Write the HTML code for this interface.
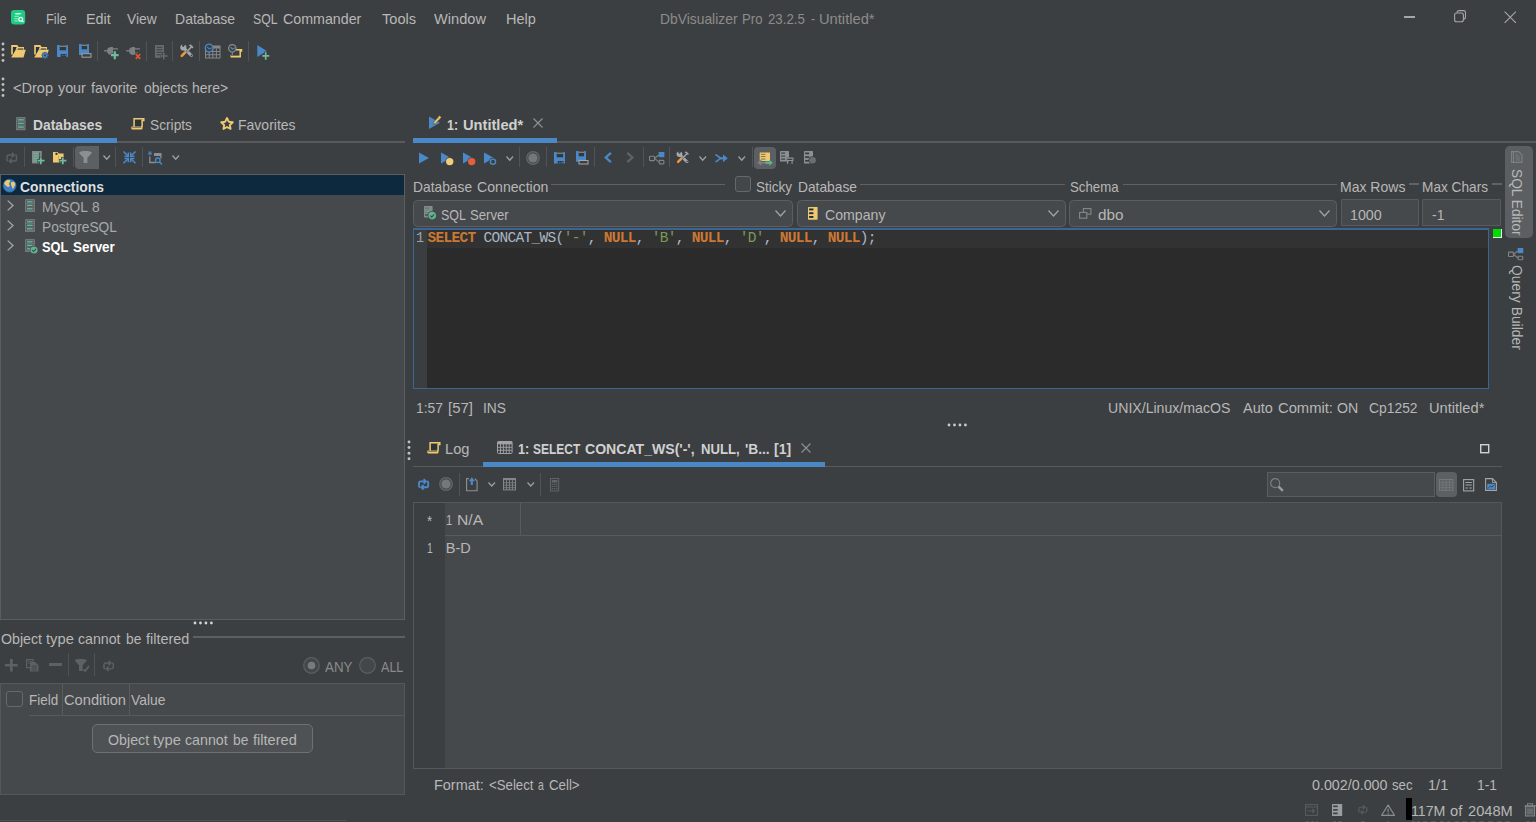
<!DOCTYPE html>
<html lang="en"><head><meta charset="utf-8"><title>DbVisualizer Pro 23.2.5 - Untitled*</title>
<style>
html,body{margin:0;padding:0}
body{width:1536px;height:822px;overflow:hidden;background:#3c3f41;position:relative;font-family:"Liberation Sans", sans-serif;}
.r{position:absolute;box-sizing:border-box}
.i{position:absolute;overflow:visible}
.t{position:absolute;white-space:pre;line-height:1;transform-origin:0 0;}
.s{font-family:"Liberation Sans", sans-serif}
.m{font-family:"Liberation Mono", monospace}
</style></head>
<body>
<svg class="i" style="left:10.9px;top:9.8px" width="14.2" height="14.5" viewBox="0 0 14.200 14.500"><rect x="0" y="0" width="14.2" height="14.5" fill="#1fcb83" rx="3.2"/><ellipse cx="7" cy="3.700" rx="3.600" ry="0.700" fill="#e9fff5" opacity="0.9"/><path d="M3.300 6.400h4.500M3.300 8.600h3.300M3.300 10.800h4" fill="none" stroke="#e9fff5" stroke-width="1.3" opacity="0.5"/><circle cx="9.7" cy="9.2" r="1.9" fill="none" stroke="#e9fff5" stroke-width="1.3"/><path d="M11 10.600l1.500 1.500" fill="none" stroke="#e9fff5" stroke-width="1.4"/><circle cx="9.7" cy="9.2" r="1.9" fill="none" stroke="#1fcb83" stroke-width="0"/></svg>
<span class="t s" style="font-size:14.5px;color:#b7b7b7;left:45.61px;top:11.73px;transform:scaleX(0.8879);">File</span>
<span class="t s" style="font-size:14.5px;color:#b7b7b7;left:85.61px;top:11.73px;transform:scaleX(0.9893);">Edit</span>
<span class="t s" style="font-size:14.5px;color:#b7b7b7;left:127.30px;top:11.73px;transform:scaleX(0.9528);">View</span>
<span class="t s" style="font-size:14.5px;color:#b7b7b7;left:174.83px;top:11.73px;transform:scaleX(0.9671);">Database</span>
<span class="t s" style="font-size:14.5px;color:#b7b7b7;left:253.30px;top:11.73px;transform:scaleX(0.8463);">SQL</span>
<span class="t s" style="font-size:14.5px;color:#b7b7b7;left:283.30px;top:11.73px;transform:scaleX(0.9819);">Commander</span>
<span class="t s" style="font-size:14.5px;color:#b7b7b7;left:381.50px;top:11.73px;transform:scaleX(1.0060);">Tools</span>
<span class="t s" style="font-size:14.5px;color:#b7b7b7;left:434.30px;top:11.73px;transform:scaleX(1.0077);">Window</span>
<span class="t s" style="font-size:14.5px;color:#b7b7b7;left:505.50px;top:11.73px;transform:scaleX(1.0015);">Help</span>
<span class="t s" style="font-size:14.5px;color:#8c8c8c;left:660.34px;top:11.73px;transform:scaleX(0.9551);">DbVisualizer </span>
<span class="t s" style="font-size:14.5px;color:#8c8c8c;left:742.39px;top:11.73px;transform:scaleX(0.9070);">Pro </span>
<span class="t s" style="font-size:14.5px;color:#8c8c8c;left:768.30px;top:11.73px;transform:scaleX(0.9118);">23.2.5 </span>
<span class="t s" style="font-size:14.5px;color:#8c8c8c;left:811.00px;top:11.73px;transform:scaleX(0.8600);">- </span>
<span class="t s" style="font-size:14.5px;color:#8c8c8c;left:819.49px;top:11.73px;transform:scaleX(1.0136);">Untitled*</span>
<div class="r" style="left:1403.5px;top:16.4px;width:11.5px;height:1.2px;background:#a6a6a6;"></div>
<svg class="i" style="left:1453.7px;top:10.3px" width="12" height="12" viewBox="0 0 12 12"><rect x="0.6" y="3" width="8.8" height="8.8" fill="none" stroke="#a6a6a6" stroke-width="1.1" rx="2"/><path d="M3 2.800v-0.200a2 2 0 0 1 2-2h4.500a2 2 0 0 1 2 2v4.500a2 2 0 0 1-2 2h-0.200" fill="none" stroke="#a6a6a6" stroke-width="1.1"/></svg>
<svg class="i" style="left:1504px;top:10.5px" width="12.5" height="12.5" viewBox="0 0 12.500 12.500"><path d="M0.600 0.600l11.300 11.300M11.900 0.600L0.600 11.900" fill="none" stroke="#a6a6a6" stroke-width="1.1"/></svg>
<svg class="i" style="left:0.3999999999999999px;top:40.7px" width="6.0" height="22.5" viewBox="0 0 6.0 22.5"><circle cx="3.0" cy="3.0" r="1.45" fill="#bdbfc0"/><circle cx="3.0" cy="8.5" r="1.45" fill="#bdbfc0"/><circle cx="3.0" cy="14.0" r="1.45" fill="#bdbfc0"/><circle cx="3.0" cy="19.5" r="1.45" fill="#bdbfc0"/></svg>
<svg class="i" style="left:11.4px;top:44.8px" width="15" height="12.5" viewBox="0 0 15 12.500"><path d="M0.200 0h6l1.500 2.100h5.300v2.700H5L2.300 9.500H0.200z" fill="#efc971"/><path d="M1.900 2H5.600L4.700 4.800L2.500 9.200L1.900 9.500z" fill="#27333f"/><path d="M7 3.500h5.200v1.300H6.500z" fill="#27333f"/><path d="M4.900 4.700H14.800L12.500 12.400H0.200L2.300 9z" fill="#efc971"/></svg>
<svg class="i" style="left:33.7px;top:44.8px" width="15" height="14" viewBox="0 0 15 14"><path d="M0.200 0h6l1.500 2.100h5.300v2.700H5L2.300 9.500H0.200z" fill="#efc971"/><path d="M1.900 2H5.600L4.700 4.800L2.500 9.200L1.900 9.500z" fill="#27333f"/><path d="M7 3.500h5.200v1.300H6.500z" fill="#27333f"/><path d="M4.900 4.700H14.800L12.500 12.400H0.200L2.300 9z" fill="#efc971"/><circle cx="11" cy="10.3" r="2.9" fill="#4a88c7" stroke="#3c3f41" stroke-width="0.8"/><circle cx="11" cy="10.3" r="1.1" fill="#3c3f41"/><path d="M11 6.800v1M11 12.800v1M7.500 10.300h1M13.500 10.300h1M8.600 7.900l.7.700M12.700 12l.7.700M8.600 12.700l.7-.7M12.700 8.600l.7-.7" fill="none" stroke="#4a88c7" stroke-width="1.1"/></svg>
<svg class="i" style="left:57px;top:45px" width="11" height="12" viewBox="0 0 11 12"><rect x="0" y="0" width="11" height="12" fill="#4a88c7" rx="0.6"/><rect x="2.7" y="0" width="6.4" height="5.3" fill="#35383a"/><rect x="2.7" y="0.7" width="6.4" height="1" fill="#9a9fa3"/><rect x="3.7" y="9" width="5.8" height="3" fill="#35383a"/><rect x="5.4" y="9.9" width="1" height="1.2" fill="#4a88c7"/><rect x="7.8" y="9.9" width="1" height="1.2" fill="#4a88c7"/></svg>
<svg class="i" style="left:79px;top:44.4px" width="12.5" height="13.7" viewBox="0 0 12.500 13.700"><rect x="0" y="0" width="10" height="11" fill="#4a88c7" rx="0.6"/><rect x="2.7" y="0" width="5.4" height="5.3" fill="#35383a"/><rect x="2.7" y="0.7" width="5.4" height="1" fill="#9a9fa3"/><rect x="3.7" y="9" width="4.8" height="2" fill="#35383a"/><rect x="4.4" y="9.9" width="1" height="1.2" fill="#4a88c7"/><rect x="6.8" y="9.9" width="1" height="1.2" fill="#4a88c7"/><rect x="3" y="9.7" width="9" height="3.5" fill="#3c3f41" stroke="#a3a7aa" stroke-width="1"/></svg>
<div class="r" style="left:97px;top:40.5px;width:1px;height:20.5px;background:#515457;"></div>
<svg class="i" style="left:104px;top:47.4px" width="15" height="12.5" viewBox="0 0 15 12.500"><path d="M0 3.800h3.500" fill="none" stroke="#7d8082" stroke-width="1.3"/><path d="M3 3.800c0-2.600 1.800-3.800 4.500-3.800h1.500v8h-1.500c-2.700 0-4.500-1.400-4.500-4.200z" fill="#7d8082"/><path d="M9 1.800h5M9 6.200h3" fill="none" stroke="#7d8082" stroke-width="1.3"/><path d="M10.800 4v8.300M6.700 8.200h8" fill="none" stroke="#3c3f41" stroke-width="3.6"/><path d="M10.800 4.300v7.900M7 8.200h7.600" fill="none" stroke="#6dbc9d" stroke-width="2.2"/></svg>
<svg class="i" style="left:125.8px;top:47.4px" width="15" height="12.5" viewBox="0 0 15 12.500"><path d="M0 3.800h3.500" fill="none" stroke="#7d8082" stroke-width="1.3"/><path d="M3 3.800c0-2.600 1.800-3.800 4.500-3.800h1.500v8h-1.500c-2.700 0-4.500-1.400-4.500-4.200z" fill="#7d8082"/><path d="M9 1.800h5M9 6.200h3" fill="none" stroke="#7d8082" stroke-width="1.3"/><path d="M9.500 6.500l5 5.500M14.500 6.500l-5 5.500" fill="none" stroke="#3c3f41" stroke-width="3.2"/><path d="M9.800 7l4.400 4.800M14.200 7l-4.400 4.800" fill="none" stroke="#e0542f" stroke-width="1.8"/></svg>
<div class="r" style="left:146px;top:40.5px;width:1px;height:20.5px;background:#515457;"></div>
<svg class="i" style="left:155px;top:44.7px" width="12.5" height="14.5" viewBox="0 0 12.500 14.500"><rect x="0" y="0" width="9" height="12.8" fill="#686b6d"/><path d="M1.500 2.200h6M1.500 4.700h6M1.500 7.200h6M1.500 9.700h4" fill="none" stroke="#3c3f41" stroke-width="1.1"/><path d="M8.700 7.500v7M5.300 11h7" fill="none" stroke="#3c3f41" stroke-width="3.2"/><path d="M8.700 7.800v6.700M5.500 11h7" fill="none" stroke="#686b6d" stroke-width="1.5"/></svg>
<div class="r" style="left:172px;top:40.5px;width:1px;height:20.5px;background:#515457;"></div>
<svg class="i" style="left:179.7px;top:44.2px" width="14.2" height="13.5" viewBox="0 0 14.200 13.500"><path d="M1.800 11.800L5 8.600" fill="none" stroke="#ec9a3c" stroke-width="2.6" stroke-linecap="round"/><path d="M2.200 0.600a3.300 3.300 0 0 0-1.600 4.600c.8 1.200 2.300 1.600 3.500 1.200l6.200 6.200c.6.600 1.600.600 2.200 0s.6-1.600 0-2.200L6.300 4.200c.4-1.200 0-2.700-1.200-3.500L3.600 2.900l-1.400-.5z" fill="#a4a7a9"/><path d="M8.200 1.300l2.600-1.100 3 3-1.200 1.200-1-.3-4.200 4.200-1.300-1.300 4.200-4.200-.8-.8z" fill="#a4a7a9" stroke="#3c3f41" stroke-width="0.5"/><circle cx="11.5" cy="11.3" r="0.9" fill="#3c3f41"/></svg>
<div class="r" style="left:199px;top:40.5px;width:1px;height:20.5px;background:#515457;"></div>
<svg class="i" style="left:204.9px;top:43.7px" width="15.5" height="14.5" viewBox="0 0 15.500 14.500"><rect x="0.5" y="2" width="14.5" height="12" fill="none" stroke="#85888a" stroke-width="1"/><rect x="0.5" y="2" width="14.5" height="2.5" fill="#85888a"/><path d="M0.500 7.500h14.500M0.500 10.700h14.500M4.200 4.500v9.500M7.800 4.500v9.500M11.400 4.500v9.500" fill="none" stroke="#85888a" stroke-width="1"/><circle cx="4.1" cy="4.1" r="3.9" fill="#3c3f41" stroke="#4a88c7" stroke-width="1.3"/><path d="M2.200 3.200l2 1.700 2.500-1.200" fill="none" stroke="#4a88c7" stroke-width="1.1"/></svg>
<svg class="i" style="left:227.7px;top:44.2px" width="15" height="14" viewBox="0 0 15 14"><path d="M8 5.700h5.500v1.300h-1.300v5" fill="none" stroke="#efc971" stroke-width="1.5"/><rect x="2.5" y="11" width="10.5" height="2.6" fill="#efc971" rx="0.6"/><path d="M3 11.300h8.500" fill="none" stroke="#1f2d3a" stroke-width="0.7"/><circle cx="4.3" cy="4.3" r="3.7" fill="#3c3f41" stroke="#8b8e90" stroke-width="1.2"/><path d="M2.500 3.300l2 1.700 2.200-1.200" fill="none" stroke="#4a88c7" stroke-width="1.2"/><path d="M4.300 8.200v2.600" fill="none" stroke="#8b8e90" stroke-width="1.2"/></svg>
<div class="r" style="left:247.5px;top:40.5px;width:1px;height:20.5px;background:#515457;"></div>
<svg class="i" style="left:256.7px;top:45px" width="13" height="15" viewBox="0 0 13 15"><path d="M0.300 0L9.800 6 0.300 12z" fill="#4a88c7"/><path d="M8.700 6.700v8.300M4.900 10.800h7.800" fill="none" stroke="#3c3f41" stroke-width="3.3"/><path d="M8.700 7.200v7.500M5.300 10.800h7" fill="none" stroke="#70b999" stroke-width="1.7"/></svg>
<svg class="i" style="left:0.3999999999999999px;top:75.6px" width="6.0" height="22.5" viewBox="0 0 6.0 22.5"><circle cx="3.0" cy="3.0" r="1.45" fill="#bdbfc0"/><circle cx="3.0" cy="8.5" r="1.45" fill="#bdbfc0"/><circle cx="3.0" cy="14.0" r="1.45" fill="#bdbfc0"/><circle cx="3.0" cy="19.5" r="1.45" fill="#bdbfc0"/></svg>
<span class="t s" style="font-size:14.5px;color:#b7b7b7;left:13.20px;top:80.73px;transform:scaleX(1.0042);">&lt;Drop </span>
<span class="t s" style="font-size:14.5px;color:#b7b7b7;left:58.20px;top:80.73px;transform:scaleX(0.9867);">your </span>
<span class="t s" style="font-size:14.5px;color:#b7b7b7;left:91.40px;top:80.73px;transform:scaleX(0.9771);">favorite </span>
<span class="t s" style="font-size:14.5px;color:#b7b7b7;left:143.50px;top:80.73px;transform:scaleX(0.9564);">objects </span>
<span class="t s" style="font-size:14.5px;color:#b7b7b7;left:192.24px;top:80.73px;transform:scaleX(0.9633);">here&gt;</span>
<svg class="i" style="left:16.4px;top:116.7px" width="9.6" height="13.2" viewBox="0 0 9.6 13.2"><rect x="0" y="0" width="9.6" height="13.2" fill="#70767a" rx="0.5"/><rect x="1.1" y="1.5" width="7.3999999999999995" height="2.6999999999999997" fill="#4d5356"/><rect x="1.9" y="2.1" width="5.0" height="1.4999999999999996" fill="#62b896"/><rect x="7.199999999999999" y="2.1" width="0.8" height="1.4999999999999996" fill="#8fa59c"/><rect x="1.1" y="5.1" width="7.3999999999999995" height="2.6999999999999997" fill="#4d5356"/><rect x="1.9" y="5.7" width="5.0" height="1.4999999999999996" fill="#62b896"/><rect x="7.199999999999999" y="5.7" width="0.8" height="1.4999999999999996" fill="#8fa59c"/><rect x="1.1" y="8.7" width="7.3999999999999995" height="2.6999999999999997" fill="#4d5356"/><rect x="1.9" y="9.299999999999999" width="5.0" height="1.4999999999999996" fill="#62b896"/><rect x="7.199999999999999" y="9.299999999999999" width="0.8" height="1.4999999999999996" fill="#8fa59c"/></svg>
<span class="t s" style="font-size:14.5px;color:#d0d0d0;font-weight:700;left:33.40px;top:117.73px;transform:scaleX(0.9534);">Databases</span>
<svg class="i" style="left:130.8px;top:117.6px" width="13.5" height="11.8" viewBox="0 0 13.500 11.800"><rect x="3.8" y="1.6" width="7" height="6.8" fill="#2c333b"/><path d="M3.100 9V0.800h9.700v1.700h-1.700V9" fill="none" stroke="#efc971" stroke-width="1.5"/><rect x="0.3" y="8.6" width="11.2" height="2.8" fill="#efc971" rx="0.8"/><path d="M1.200 9.300h8.800" fill="none" stroke="#2c333b" stroke-width="0.6"/></svg>
<span class="t s" style="font-size:14.5px;color:#b7b7b7;left:150.30px;top:117.73px;transform:scaleX(0.9463);">Scripts</span>
<svg class="i" style="left:219.6px;top:117.3px" width="14" height="12.5" viewBox="0 0 14 12.500"><path d="M7 1l1.750 3.700 4 .5-2.900 2.800.7 3.900L7 10l-3.550 1.900.7-3.900L1.250 5.200l4-.5z" fill="none" stroke="#efc971" stroke-width="1.9" stroke-linejoin="round"/></svg>
<span class="t s" style="font-size:14.5px;color:#b7b7b7;left:238.33px;top:117.73px;transform:scaleX(0.9661);">Favorites</span>
<div class="r" style="left:0px;top:141px;width:405px;height:2px;background:#585b5d;"></div>
<div class="r" style="left:0px;top:137.5px;width:116.7px;height:5px;background:#4a88c7;"></div>
<svg class="i" style="left:5.6px;top:152px" width="11.5" height="12" viewBox="0 0 11.500 12"><path d="M1 6.500V4.800a1.800 1.800 0 0 1 1.800-1.800H7.500M5.800 0.700L8.100 3 5.800 5.300" fill="none" stroke="#5c6062" stroke-width="1.4"/><path d="M10.500 5.500v1.700a1.800 1.800 0 0 1-1.800 1.800H4M5.700 6.700L3.400 9l2.300 2.300" fill="none" stroke="#5c6062" stroke-width="1.4"/><path d="M10.500 6V4.200a1.200 1.200 0 0 0-1.200-1.200M1 6v1.800a1.200 1.200 0 0 0 1.200 1.200" fill="none" stroke="#5c6062" stroke-width="1.4"/></svg>
<div class="r" style="left:24px;top:147px;width:1px;height:20px;background:#515457;"></div>
<svg class="i" style="left:32.4px;top:151.2px" width="12.6" height="13.4" viewBox="0 0 12.600 13.400"><rect x="0" y="0" width="9.8" height="12.4" fill="#868a8c"/><path d="M1.500 2.300h5M1.500 4.900h5M1.500 7.500h5M1.500 10h3" fill="none" stroke="#5fb593" stroke-width="1.3"/><rect x="7" y="1.5" width="1.2" height="9.5" fill="#55595b"/><path d="M8.800 6v7.400M5.200 9.700h7.400" fill="none" stroke="#3c3f41" stroke-width="3.4"/><path d="M8.800 6.400v6.800M5.500 9.700h7" fill="none" stroke="#6dbc9d" stroke-width="1.8"/></svg>
<svg class="i" style="left:53.2px;top:152px" width="13.8" height="12.5" viewBox="0 0 13.800 12.500"><path d="M0 0h4.600l1.200 1.600h4.800v9H0z" fill="#efc971"/><path d="M2.500 0.800h2v2h-2z" fill="#1f2d3a"/><path d="M5.500 3.500v5.500" fill="none" stroke="#d9a94a" stroke-width="1"/><path d="M9.800 5v7.500M6 8.700h7.600" fill="none" stroke="#3c3f41" stroke-width="3.4"/><path d="M9.800 5.400v6.900M6.400 8.700h7" fill="none" stroke="#6dbc9d" stroke-width="1.8"/></svg>
<div class="r" style="left:72.5px;top:147px;width:1px;height:20px;background:#515457;"></div>
<div class="r" style="left:75.2px;top:146px;width:23.6px;height:22.8px;background:#5c6063;border-radius:4px 0 0 4px;"></div>
<svg class="i" style="left:79.2px;top:151.4px" width="13" height="12.5" viewBox="0 0 13 12.500"><path d="M0.300 1.600C0.300 0.600 3 0 6.500 0s6.200.6 6.200 1.600v.7L8.400 6.800v5.200H4.600V6.800L0.300 2.300z" fill="#8b8f92"/></svg>
<svg class="i" style="left:102.5px;top:155.4px" width="7.5" height="5.2" viewBox="0 0 7.5 5.2"><path d="M0.500 0.500L3.75 4.2L7.0 0.500" fill="none" stroke="#9da0a2" stroke-width="1.3"/></svg>
<div class="r" style="left:115px;top:147px;width:1px;height:20px;background:#515457;"></div>
<svg class="i" style="left:123px;top:151.2px" width="13" height="12.8" viewBox="0 0 13 12.800"><path d="M0.500 0.500L4.800 4.800M12.500 0.500L8.200 4.800M0.500 12.300L4.800 8M12.500 12.300L8.200 8" fill="none" stroke="#4a88c7" stroke-width="1.5"/><path d="M1.600 5.300h3.700V1.600M11.400 5.300H7.700V1.600M1.600 7.500h3.700v3.700M11.400 7.500H7.700v3.700" fill="none" stroke="#4a88c7" stroke-width="1.5"/></svg>
<div class="r" style="left:142px;top:147px;width:1px;height:20px;background:#515457;"></div>
<svg class="i" style="left:148.2px;top:150.8px" width="14.8" height="13.8" viewBox="0 0 14.800 13.800"><path d="M1.800 5.500v6h6" fill="none" stroke="#8b8f92" stroke-width="1.3"/><rect x="6" y="2" width="7.5" height="3" fill="#8b8f92"/><path d="M12.900 4.500v3" fill="none" stroke="#8b8f92" stroke-width="1.3"/><path d="M0.300 0.600l3.400 3.400M3.700 0.600L0.300 4M2 0v4.600M0 2.300h4" fill="none" stroke="#4a88c7" stroke-width="0.8"/><circle cx="9.8" cy="9.3" r="2.3" fill="none" stroke="#4a88c7" stroke-width="1.3"/><path d="M11.500 11l2.600 2.500" fill="none" stroke="#4a88c7" stroke-width="1.6"/></svg>
<svg class="i" style="left:172.4px;top:155.4px" width="7.5" height="5.2" viewBox="0 0 7.5 5.2"><path d="M0.500 0.500L3.75 4.2L7.0 0.500" fill="none" stroke="#9da0a2" stroke-width="1.3"/></svg>
<div class="r" style="left:0px;top:174px;width:405px;height:446px;background:#46494b;border:1px solid #5b5e60;"></div>
<div class="r" style="left:1px;top:175px;width:403px;height:20px;background:#0d293e;"></div>
<svg class="i" style="left:3px;top:178.7px" width="13.3" height="13.3" viewBox="0 0 13.300 13.300"><circle cx="6.65" cy="6.65" r="6.5" fill="#3f7fc4"/><path d="M3.600 1.100c1.400-.6 3-.3 3.500.7.500 1.100-.9 1.700-1.100 2.700-.2 1 .9 1.500.6 2.500-.3 1-1.700 1.300-2.600.6C2.900 6.900 1.300 5.500 1.100 4.100 1.300 2.900 2.400 1.600 3.600 1.100z" fill="#efc971"/><path d="M8.300 3.200c1-.8 2.700-.7 3.600.2.800.9.800 2.400 0 3.300-.7.800-1.300 1.700-1.400 2.800-.7.300-1.400-.3-1.400-1.100 0-1-.9-1.600-1-2.600-.100-.9-.500-2 .200-2.600z" fill="#efc971"/><circle cx="6.65" cy="6.65" r="6.5" fill="none" stroke="#2f67a6" stroke-width="0.6"/></svg>
<span class="t s" style="font-size:14.5px;color:#dedede;font-weight:700;left:20.30px;top:179.73px;transform:scaleX(0.9562);">Connections</span>
<svg class="i" style="left:7.3px;top:200px" width="6.8" height="11" viewBox="0 0 6.800 11"><path d="M0.700 0.600L6 5.500 0.700 10.400" fill="none" stroke="#a4a7a9" stroke-width="1.3"/></svg>
<svg class="i" style="left:25.4px;top:199.1px" width="10" height="12.9" viewBox="0 0 10 12.9"><rect x="0" y="0" width="10" height="12.9" fill="#70767a" rx="0.5"/><rect x="1.1" y="1.5" width="7.8" height="2.6" fill="#4d5356"/><rect x="1.9" y="2.1" width="5.4" height="1.4" fill="#62b896"/><rect x="7.6" y="2.1" width="0.8" height="1.4" fill="#8fa59c"/><rect x="1.1" y="5.0" width="7.8" height="2.6" fill="#4d5356"/><rect x="1.9" y="5.6000000000000005" width="5.4" height="1.4" fill="#62b896"/><rect x="7.6" y="5.6000000000000005" width="0.8" height="1.4" fill="#8fa59c"/><rect x="1.1" y="8.5" width="7.8" height="2.6" fill="#4d5356"/><rect x="1.9" y="9.1" width="5.4" height="1.4" fill="#62b896"/><rect x="7.6" y="9.1" width="0.8" height="1.4" fill="#8fa59c"/></svg>
<span class="t s" style="font-size:14.5px;color:#a6a9ab;left:41.55px;top:199.73px;transform:scaleX(0.9476);">MySQL </span>
<span class="t s" style="font-size:14.5px;color:#a6a9ab;left:91.80px;top:199.73px;transform:scaleX(0.9500);">8</span>
<svg class="i" style="left:7.3px;top:220px" width="6.8" height="11" viewBox="0 0 6.800 11"><path d="M0.700 0.600L6 5.500 0.700 10.400" fill="none" stroke="#a4a7a9" stroke-width="1.3"/></svg>
<svg class="i" style="left:25.4px;top:219.1px" width="10" height="12.9" viewBox="0 0 10 12.9"><rect x="0" y="0" width="10" height="12.9" fill="#70767a" rx="0.5"/><rect x="1.1" y="1.5" width="7.8" height="2.6" fill="#4d5356"/><rect x="1.9" y="2.1" width="5.4" height="1.4" fill="#62b896"/><rect x="7.6" y="2.1" width="0.8" height="1.4" fill="#8fa59c"/><rect x="1.1" y="5.0" width="7.8" height="2.6" fill="#4d5356"/><rect x="1.9" y="5.6000000000000005" width="5.4" height="1.4" fill="#62b896"/><rect x="7.6" y="5.6000000000000005" width="0.8" height="1.4" fill="#8fa59c"/><rect x="1.1" y="8.5" width="7.8" height="2.6" fill="#4d5356"/><rect x="1.9" y="9.1" width="5.4" height="1.4" fill="#62b896"/><rect x="7.6" y="9.1" width="0.8" height="1.4" fill="#8fa59c"/></svg>
<span class="t s" style="font-size:14.5px;color:#a6a9ab;left:41.55px;top:219.73px;transform:scaleX(0.9484);">PostgreSQL</span>
<svg class="i" style="left:7.3px;top:240px" width="6.8" height="11" viewBox="0 0 6.800 11"><path d="M0.700 0.600L6 5.500 0.700 10.400" fill="none" stroke="#a4a7a9" stroke-width="1.3"/></svg>
<svg class="i" style="left:25.4px;top:239.1px" width="10" height="12.9" viewBox="0 0 10 12.9"><rect x="0" y="0" width="10" height="12.9" fill="#70767a" rx="0.5"/><rect x="1.1" y="1.5" width="7.8" height="2.6" fill="#4d5356"/><rect x="1.9" y="2.1" width="5.4" height="1.4" fill="#62b896"/><rect x="7.6" y="2.1" width="0.8" height="1.4" fill="#8fa59c"/><rect x="1.1" y="5.0" width="7.8" height="2.6" fill="#4d5356"/><rect x="1.9" y="5.6000000000000005" width="5.4" height="1.4" fill="#62b896"/><rect x="7.6" y="5.6000000000000005" width="0.8" height="1.4" fill="#8fa59c"/><rect x="1.1" y="8.5" width="7.8" height="2.6" fill="#4d5356"/><rect x="1.9" y="9.1" width="5.4" height="1.4" fill="#62b896"/><rect x="7.6" y="9.1" width="0.8" height="1.4" fill="#8fa59c"/></svg>
<svg class="i" style="left:30.3px;top:245.5px" width="8" height="8" viewBox="0 0 8 8"><circle cx="4" cy="4" r="4.2" fill="#46494b"/><circle cx="4" cy="4" r="3.6" fill="#5db491"/><path d="M2.200 4.100l1.400 1.400 2.400-2.700" fill="none" stroke="#46494b" stroke-width="1.1"/></svg>
<span class="t s" style="font-size:14.5px;color:#ffffff;font-weight:700;left:42.00px;top:239.73px;transform:scaleX(0.8848);">SQL </span>
<span class="t s" style="font-size:14.5px;color:#ffffff;font-weight:700;left:72.80px;top:239.73px;transform:scaleX(0.9251);">Server</span>
<svg class="i" style="left:192.0px;top:620.3px" width="22.409999999999997" height="6.0" viewBox="0 0 22.409999999999997 6.0"><circle cx="3.0" cy="3.0" r="1.4" fill="#d2d4d5"/><circle cx="8.47" cy="3.0" r="1.4" fill="#d2d4d5"/><circle cx="13.94" cy="3.0" r="1.4" fill="#d2d4d5"/><circle cx="19.41" cy="3.0" r="1.4" fill="#d2d4d5"/></svg>
<span class="t s" style="font-size:14.5px;color:#b7b7b7;left:1.00px;top:631.73px;transform:scaleX(0.9790);">Object </span>
<span class="t s" style="font-size:14.5px;color:#b7b7b7;left:46.10px;top:631.73px;transform:scaleX(1.0167);">type </span>
<span class="t s" style="font-size:14.5px;color:#b7b7b7;left:78.20px;top:631.73px;transform:scaleX(0.9769);">cannot </span>
<span class="t s" style="font-size:14.5px;color:#b7b7b7;left:125.60px;top:631.73px;transform:scaleX(0.9524);">be </span>
<span class="t s" style="font-size:14.5px;color:#b7b7b7;left:145.50px;top:631.73px;transform:scaleX(0.9941);">filtered</span>
<div class="r" style="left:193px;top:635.7px;width:212px;height:2px;background:#5d6062;"></div>
<svg class="i" style="left:4.9px;top:659px" width="12.7" height="12.5" viewBox="0 0 12.700 12.500"><path d="M6.350 0v12.500M0 6.250h12.700" fill="none" stroke="#5d6163" stroke-width="2.7"/></svg>
<svg class="i" style="left:26px;top:659px" width="13" height="12.5" viewBox="0 0 13 12.500"><path d="M0.600 0.600h6.500v8H0.600z" fill="none" stroke="#5d6163" stroke-width="1.2"/><path d="M4 3h5l3.500 3.200v6.300H4z" fill="#5d6163"/><path d="M5.500 7h5.500M5.500 9h5.500M5.500 11h5.500" fill="none" stroke="#3c3f41" stroke-width="0.8"/><path d="M2 2.500h3.500M2 4.500h1.500" fill="none" stroke="#5d6163" stroke-width="0.8"/></svg>
<div class="r" style="left:48.8px;top:663px;width:13px;height:3.2px;background:#5d6163;"></div>
<div class="r" style="left:68px;top:653px;width:1px;height:23px;background:#4f5254;"></div>
<svg class="i" style="left:74.9px;top:659px" width="14.5" height="12.5" viewBox="0 0 14.500 12.500"><path d="M0 1.300C0 0.500 2.700 0 5.800 0s5.800.5 5.800 1.300v.8L7.600 6.300v5.700H4V6.300L0 2.100z" fill="#5d6163"/><path d="M8.500 10.500l1.800 1.500 3.700-5" fill="none" stroke="#5d6163" stroke-width="1.8"/></svg>
<div class="r" style="left:94px;top:653px;width:1px;height:23px;background:#4f5254;"></div>
<svg class="i" style="left:102.7px;top:659.5px" width="11.3" height="11.8" viewBox="0 0 11.500 12"><path d="M1 6.500V4.800a1.800 1.800 0 0 1 1.800-1.800H7.500M5.800 0.700L8.100 3 5.800 5.300" fill="none" stroke="#5d6163" stroke-width="1.4"/><path d="M10.500 5.500v1.700a1.800 1.800 0 0 1-1.800 1.800H4M5.700 6.700L3.400 9l2.300 2.300" fill="none" stroke="#5d6163" stroke-width="1.4"/><path d="M10.500 6V4.200a1.200 1.200 0 0 0-1.200-1.200M1 6v1.800a1.200 1.200 0 0 0 1.200 1.200" fill="none" stroke="#5d6163" stroke-width="1.4"/></svg>
<svg class="i" style="left:303px;top:657.4px" width="17" height="17" viewBox="0 0 17 17"><circle cx="8.5" cy="8.5" r="7.8" fill="#43474a" stroke="#5b5f61" stroke-width="1.2"/><circle cx="8.5" cy="8.5" r="3.8" fill="#777b7e"/></svg>
<span class="t s" style="font-size:14.5px;color:#888b8d;left:325.20px;top:659.73px;transform:scaleX(0.9223);">ANY</span>
<svg class="i" style="left:358.8px;top:657.4px" width="17" height="17" viewBox="0 0 17 17"><circle cx="8.5" cy="8.5" r="7.8" fill="#43474a" stroke="#5b5f61" stroke-width="1.2"/></svg>
<span class="t s" style="font-size:14.5px;color:#888b8d;left:381.30px;top:659.73px;transform:scaleX(0.8665);">ALL</span>
<div class="r" style="left:0px;top:683px;width:405px;height:112px;background:#46494b;border:1px solid #55585a;"></div>
<div class="r" style="left:6.4px;top:690.7px;width:16.8px;height:16.6px;background:#43474a;border:1px solid #65696b;border-radius:3px;"></div>
<span class="t s" style="font-size:14.5px;color:#b7b7b7;left:29.37px;top:692.73px;transform:scaleX(0.9287);">Field</span>
<span class="t s" style="font-size:14.5px;color:#b7b7b7;left:63.70px;top:692.73px;transform:scaleX(1.0114);">Condition</span>
<span class="t s" style="font-size:14.5px;color:#b7b7b7;left:130.70px;top:692.73px;transform:scaleX(0.9542);">Value</span>
<div class="r" style="left:62px;top:684px;width:1px;height:31px;background:#585b5d;"></div>
<div class="r" style="left:129px;top:684px;width:1px;height:31px;background:#585b5d;"></div>
<div class="r" style="left:29px;top:715px;width:375px;height:1px;background:#585b5d;"></div>
<div class="r" style="left:92px;top:724px;width:221px;height:29px;background:#4e5254;border:1px solid #6e7173;border-radius:5px;"></div>
<span class="t s" style="font-size:14.5px;color:#b7b7b7;left:107.80px;top:732.73px;transform:scaleX(0.9814);">Object </span>
<span class="t s" style="font-size:14.5px;color:#b7b7b7;left:153.00px;top:732.73px;transform:scaleX(1.0204);">type </span>
<span class="t s" style="font-size:14.5px;color:#b7b7b7;left:185.20px;top:732.73px;transform:scaleX(0.9792);">cannot </span>
<span class="t s" style="font-size:14.5px;color:#b7b7b7;left:232.70px;top:732.73px;transform:scaleX(0.9524);">be </span>
<span class="t s" style="font-size:14.5px;color:#b7b7b7;left:252.60px;top:732.73px;transform:scaleX(1.0056);">filtered</span>
<div class="r" style="left:0px;top:820px;width:347px;height:1px;background:#4d5052;"></div>
<svg class="i" style="left:428.9px;top:115.3px" width="13" height="14.7" viewBox="0 0 13 14.700"><path d="M0 1.600L11 7.800 0 13.900z" fill="#4a88c7"/><path d="M5 6.800L10.600 0.600l1.800 1.600L6.800 8.400l-2.500.900z" fill="#efc971" stroke="#3c3f41" stroke-width="0.5"/><path d="M6.300 5.800l1.700 1.500M7.600 4.400l1.700 1.500M8.900 3l1.700 1.500" fill="none" stroke="#c79a3f" stroke-width="0.6"/></svg>
<span class="t s" style="font-size:14.5px;color:#d0d0d0;font-weight:700;left:446.90px;top:117.73px;transform:scaleX(0.8621);">1: </span>
<span class="t s" style="font-size:14.5px;color:#d0d0d0;font-weight:700;left:462.80px;top:117.73px;transform:scaleX(1.0106);">Untitled*</span>
<svg class="i" style="left:533px;top:118.3px" width="10" height="10" viewBox="0 0 10 10"><path d="M0.500 0.500l9 9M9.500 0.500l-9 9" fill="none" stroke="#909395" stroke-width="1.1"/></svg>
<div class="r" style="left:413px;top:141px;width:1123px;height:2px;background:#585b5d;"></div>
<div class="r" style="left:413px;top:137.5px;width:143.6px;height:5px;background:#4a88c7;"></div>
<svg class="i" style="left:419.1px;top:151.7px" width="14.5" height="14" viewBox="0 0 14.5 14"><path d="M0 0.400L10 6 0 11.600z" fill="#4a88c7"/></svg>
<svg class="i" style="left:440.7px;top:151.7px" width="14.5" height="14" viewBox="0 0 14.5 14"><path d="M0 0.400L10 6 0 11.600z" fill="#4a88c7"/><circle cx="8.7" cy="9.6" r="4.3" fill="#3c3f41"/><circle cx="8.7" cy="9.6" r="3.7" fill="#f2cd78"/></svg>
<svg class="i" style="left:463.3px;top:151.7px" width="14.5" height="14" viewBox="0 0 14.5 14"><path d="M0 0.400L10 6 0 11.600z" fill="#4a88c7"/><circle cx="8.7" cy="9.6" r="4.3" fill="#3c3f41"/><circle cx="8.7" cy="9.6" r="3.7" fill="#e2603c"/></svg>
<svg class="i" style="left:484.2px;top:151.7px" width="14.5" height="14" viewBox="0 0 14.5 14"><path d="M0 0.400L10 6 0 11.600z" fill="#4a88c7"/><circle cx="9" cy="9.7" r="3.9" fill="#3c3f41"/><circle cx="9" cy="9.7" r="2.6" fill="#3c3f41" stroke="#4a88c7" stroke-width="1.4"/></svg>
<svg class="i" style="left:506px;top:155.8px" width="7.5" height="5.2" viewBox="0 0 7.5 5.2"><path d="M0.500 0.500L3.75 4.2L7.0 0.500" fill="none" stroke="#9da0a2" stroke-width="1.3"/></svg>
<div class="r" style="left:518.5px;top:147.4px;width:1px;height:19.599999999999994px;background:#515457;"></div>
<svg class="i" style="left:526.2px;top:150.9px" width="14" height="14" viewBox="0 0 14 14"><circle cx="7" cy="7" r="6.3" fill="#474b4d" stroke="#63676a" stroke-width="1.2"/><circle cx="7" cy="7" r="4.6" fill="#747879"/></svg>
<div class="r" style="left:546px;top:147.4px;width:1px;height:19.599999999999994px;background:#515457;"></div>
<svg class="i" style="left:554.2px;top:151.7px" width="11" height="11.6" viewBox="0 0 11 11.600"><rect x="0" y="0" width="11" height="11.6" fill="#4a88c7" rx="0.6"/><rect x="2.7" y="0" width="6.4" height="5.3" fill="#35383a"/><rect x="2.7" y="0.7" width="6.4" height="1" fill="#9a9fa3"/><rect x="3.7" y="9" width="5.8" height="2.5999999999999996" fill="#35383a"/><rect x="5.4" y="9.9" width="1" height="1.2" fill="#4a88c7"/><rect x="7.8" y="9.9" width="1" height="1.2" fill="#4a88c7"/></svg>
<svg class="i" style="left:576.1px;top:150.8px" width="12.5" height="13.5" viewBox="0 0 12.500 13.500"><rect x="0" y="0" width="10" height="10.8" fill="#4a88c7" rx="0.6"/><rect x="2.7" y="0" width="5.4" height="5.3" fill="#35383a"/><rect x="2.7" y="0.7" width="5.4" height="1" fill="#9a9fa3"/><rect x="3.7" y="9" width="4.8" height="1.8000000000000007" fill="#35383a"/><rect x="4.4" y="9.9" width="1" height="1.2" fill="#4a88c7"/><rect x="6.8" y="9.9" width="1" height="1.2" fill="#4a88c7"/><rect x="3" y="9.5" width="9" height="3.5" fill="#3c3f41" stroke="#a3a7aa" stroke-width="1"/></svg>
<div class="r" style="left:594px;top:147.4px;width:1px;height:19.599999999999994px;background:#515457;"></div>
<svg class="i" style="left:604.2px;top:152.2px" width="8.2" height="11" viewBox="0 0 8.200 11"><path d="M6.900 0.800L1.800 5.500l5.100 4.700" fill="none" stroke="#4a88c7" stroke-width="2.3"/></svg>
<svg class="i" style="left:626px;top:152.2px" width="8.2" height="11" viewBox="0 0 8.200 11"><path d="M1.300 0.800L6.400 5.500 1.300 10.200" fill="none" stroke="#5f6365" stroke-width="2.3"/></svg>
<div class="r" style="left:642.5px;top:147.4px;width:1px;height:19.599999999999994px;background:#515457;"></div>
<svg class="i" style="left:649.2px;top:151.8px" width="15.5" height="12.5" viewBox="0 0 15.500 12.500"><rect x="9.7" y="0" width="5.7" height="5.2" fill="#4a88c7"/><rect x="0.55" y="4.2" width="4.9" height="4.4" fill="none" stroke="#808486" stroke-width="1.1" rx="0.5"/><rect x="10.2" y="8.4" width="4.7" height="3.5" fill="none" stroke="#808486" stroke-width="1.1" rx="0.8"/><path d="M5.500 6.400L9.700 3M5.500 6.400l4.700 3.700" fill="none" stroke="#808486" stroke-width="1.1"/></svg>
<div class="r" style="left:669px;top:147.4px;width:1px;height:19.599999999999994px;background:#515457;"></div>
<svg class="i" style="left:676.1px;top:151.3px" width="14" height="12.5" viewBox="0 0 14.200 13.500"><path d="M1.800 11.800L5 8.600" fill="none" stroke="#ec9a3c" stroke-width="2.6" stroke-linecap="round"/><path d="M2.200 0.600a3.300 3.300 0 0 0-1.600 4.600c.8 1.200 2.300 1.600 3.500 1.200l6.200 6.200c.6.600 1.600.600 2.200 0s.6-1.600 0-2.200L6.300 4.200c.4-1.200 0-2.700-1.200-3.500L3.600 2.900l-1.400-.5z" fill="#a4a7a9"/><path d="M8.200 1.300l2.600-1.100 3 3-1.200 1.200-1-.3-4.200 4.200-1.300-1.300 4.200-4.200-.8-.8z" fill="#a4a7a9" stroke="#3c3f41" stroke-width="0.5"/><circle cx="11.5" cy="11.3" r="0.9" fill="#3c3f41"/></svg>
<svg class="i" style="left:699.4px;top:155.8px" width="7.5" height="5.2" viewBox="0 0 7.5 5.2"><path d="M0.500 0.500L3.75 4.2L7.0 0.500" fill="none" stroke="#9da0a2" stroke-width="1.3"/></svg>
<svg class="i" style="left:715px;top:153.6px" width="13" height="8.6" viewBox="0 0 13 8.600"><path d="M0.300 0.900c3 0 3.200 3.400 6 3.400M0.300 7.700c3 0 3.200-3.400 6-3.400" fill="none" stroke="#4a88c7" stroke-width="1.7"/><path d="M5.500 4.300h3.500" fill="none" stroke="#4a88c7" stroke-width="2.2"/><path d="M8 0.400l4.800 3.900-4.800 3.900z" fill="#4a88c7"/></svg>
<svg class="i" style="left:737.6px;top:155.8px" width="7.5" height="5.2" viewBox="0 0 7.5 5.2"><path d="M0.500 0.500L3.75 4.2L7.0 0.500" fill="none" stroke="#9da0a2" stroke-width="1.3"/></svg>
<div class="r" style="left:751.5px;top:147.4px;width:1px;height:19.599999999999994px;background:#515457;"></div>
<div class="r" style="left:754px;top:147px;width:21.8px;height:21.8px;background:#5c6063;border-radius:4px;"></div>
<svg class="i" style="left:757px;top:151.8px" width="16.5" height="13" viewBox="0 0 16.500 13"><rect x="2.7" y="0.4" width="10.3" height="8.7" fill="#efc971" rx="0.6"/><rect x="3.8000000000000003" y="1.9" width="4.635000000000001" height="0.5333333333333332" fill="#1f2d3a"/><rect x="3.8000000000000003" y="4.333333333333333" width="4.635000000000001" height="0.5333333333333332" fill="#1f2d3a"/><rect x="3.8000000000000003" y="6.766666666666666" width="4.635000000000001" height="0.5333333333333332" fill="#1f2d3a"/><path d="M9 10.700H1.500M4.300 8.200L1.500 10.700l2.800 2.300" fill="none" stroke="#7d8184" stroke-width="1.5"/><path d="M8.500 10.700h5" fill="none" stroke="#5db491" stroke-width="2.4"/><path d="M12.300 7.700l3.600 3-3.600 3z" fill="#5db491"/></svg>
<svg class="i" style="left:779.9px;top:151.2px" width="13.6" height="13.2" viewBox="0 0 13.600 13.200"><rect x="0" y="0" width="9" height="10.5" fill="#8d9193" rx="0.6"/><rect x="1.1" y="1.5" width="4.05" height="1.1333333333333333" fill="#3c3f41"/><rect x="1.1" y="4.533333333333333" width="4.05" height="1.1333333333333333" fill="#3c3f41"/><rect x="1.1" y="7.566666666666666" width="4.05" height="1.1333333333333333" fill="#3c3f41"/><path d="M6.200 6.600h6.800v3H6.200z" fill="#3c3f41"/><path d="M6.700 7.100h6.300v2.400H6.700zM7.600 9.500v3.500M12.100 9.500v3.500" fill="none" stroke="#8d9193" stroke-width="1.1"/></svg>
<svg class="i" style="left:804.1px;top:151.2px" width="12.5" height="13.2" viewBox="0 0 12.500 13.200"><rect x="0" y="0" width="9" height="12.5" fill="#8d9193" rx="0.6"/><rect x="1.1" y="1.5" width="4.05" height="1.7999999999999998" fill="#3c3f41"/><rect x="1.1" y="5.199999999999999" width="4.05" height="1.7999999999999998" fill="#3c3f41"/><rect x="1.1" y="8.899999999999999" width="4.05" height="1.7999999999999998" fill="#3c3f41"/><circle cx="8.6" cy="9.3" r="4" fill="#3c3f41"/><circle cx="8.6" cy="9.3" r="3.3" fill="#6a6e70"/></svg>
<span class="t s" style="font-size:14.5px;color:#b7b7b7;left:413.05px;top:179.73px;transform:scaleX(0.9515);">Database </span>
<span class="t s" style="font-size:14.5px;color:#b7b7b7;left:477.05px;top:179.73px;transform:scaleX(0.9735);">Connection</span>
<div class="r" style="left:551.3px;top:183.5px;width:174.2px;height:1.8px;background:#606365;"></div>
<div class="r" style="left:735px;top:176px;width:16.3px;height:16.2px;background:#43474a;border:1px solid #65696b;border-radius:3px;"></div>
<span class="t s" style="font-size:14.5px;color:#b7b7b7;left:756.00px;top:179.73px;transform:scaleX(0.9335);">Sticky</span>
<span class="t s" style="font-size:14.5px;color:#b7b7b7;left:797.55px;top:179.73px;transform:scaleX(0.9507);">Database</span>
<div class="r" style="left:860.3px;top:183.5px;width:205.2px;height:1.8px;background:#606365;"></div>
<span class="t s" style="font-size:14.5px;color:#b7b7b7;left:1069.70px;top:179.73px;transform:scaleX(0.9126);">Schema</span>
<div class="r" style="left:1123px;top:183.5px;width:214px;height:1.8px;background:#606365;"></div>
<span class="t s" style="font-size:14.5px;color:#b7b7b7;left:1340.33px;top:179.73px;transform:scaleX(0.9665);">Max Rows</span>
<div class="r" style="left:1409px;top:183px;width:10px;height:1.6px;background:#606365;"></div>
<span class="t s" style="font-size:14.5px;color:#b7b7b7;left:1422.16px;top:179.73px;transform:scaleX(0.9426);">Max Chars</span>
<div class="r" style="left:1492px;top:183px;width:9.5px;height:1.6px;background:#606365;"></div>
<div class="r" style="left:413px;top:199.5px;width:380.3px;height:27px;background:#46494b;border:1px solid #5c5f61;border-radius:4.5px;"></div>
<div class="r" style="left:797.3px;top:199.5px;width:268.5px;height:27px;background:#46494b;border:1px solid #5c5f61;border-radius:4.5px;"></div>
<div class="r" style="left:1069.4px;top:199.5px;width:268px;height:27px;background:#46494b;border:1px solid #5c5f61;border-radius:4.5px;"></div>
<div class="r" style="left:1340.7px;top:199.3px;width:78.4px;height:27.2px;background:#46494b;border:1px solid #585b5d;border-radius:1px;"></div>
<div class="r" style="left:1422.3px;top:199.3px;width:79px;height:27.2px;background:#46494b;border:1px solid #585b5d;border-radius:1px;"></div>
<svg class="i" style="left:423.8px;top:206.4px" width="12.5" height="14" viewBox="0 0 12.500 14"><rect x="0" y="0" width="8.6" height="11.5" fill="#868a8c" rx="0.6"/><rect x="1.1" y="1.5" width="3.87" height="1.4666666666666668" fill="#46494b"/><rect x="1.1" y="4.866666666666667" width="3.87" height="1.4666666666666668" fill="#46494b"/><rect x="1.1" y="8.233333333333334" width="3.87" height="1.4666666666666668" fill="#46494b"/><path d="M1.300 2.100h3.500M1.300 5.500h3.500" fill="none" stroke="#5fb593" stroke-width="1"/><circle cx="8.2" cy="9.6" r="4.5" fill="#46494b"/><circle cx="8.2" cy="9.6" r="3.8" fill="#5db491"/><path d="M6.300 9.700l1.400 1.400 2.400-2.700" fill="none" stroke="#46494b" stroke-width="1.1"/></svg>
<span class="t s" style="font-size:14.5px;color:#b7b7b7;left:440.60px;top:207.73px;transform:scaleX(0.8567);">SQL </span>
<span class="t s" style="font-size:14.5px;color:#b7b7b7;left:470.30px;top:207.73px;transform:scaleX(0.9049);">Server</span>
<svg class="i" style="left:774.7px;top:210.2px" width="11" height="7" viewBox="0 0 11 7"><path d="M0.500 0.500L5.5 6L10.5 0.500" fill="none" stroke="#a0a3a5" stroke-width="1.3"/></svg>
<svg class="i" style="left:808px;top:207.1px" width="9.6" height="12.7" viewBox="0 0 9.600 12.700"><rect x="0" y="0" width="9.6" height="12.7" fill="#efc971" rx="0.6"/><rect x="1.1" y="1.5" width="4.32" height="1.8666666666666663" fill="#1f2d3a"/><rect x="1.1" y="5.266666666666666" width="4.32" height="1.8666666666666663" fill="#1f2d3a"/><rect x="1.1" y="9.033333333333331" width="4.32" height="1.8666666666666663" fill="#1f2d3a"/></svg>
<span class="t s" style="font-size:14.5px;color:#b7b7b7;left:824.80px;top:207.73px;transform:scaleX(0.9744);">Company</span>
<svg class="i" style="left:1047.5px;top:210.2px" width="11" height="7" viewBox="0 0 11 7"><path d="M0.500 0.500L5.5 6L10.5 0.500" fill="none" stroke="#a0a3a5" stroke-width="1.3"/></svg>
<svg class="i" style="left:1079px;top:207.6px" width="12.5" height="10.8" viewBox="0 0 12.500 10.800"><rect x="4.4" y="0.6" width="7.5" height="5.6" fill="none" stroke="#85898b" stroke-width="1.1"/><rect x="0.6" y="4.4" width="7.2" height="5.8" fill="#46494b" stroke="#85898b" stroke-width="1.1"/></svg>
<span class="t s" style="font-size:14.5px;color:#b7b7b7;left:1097.90px;top:207.73px;transform:scaleX(1.0527);">dbo</span>
<svg class="i" style="left:1318.8px;top:210.2px" width="11" height="7" viewBox="0 0 11 7"><path d="M0.500 0.500L5.5 6L10.5 0.500" fill="none" stroke="#a0a3a5" stroke-width="1.3"/></svg>
<span class="t s" style="font-size:14.5px;color:#b7b7b7;left:1349.82px;top:207.73px;transform:scaleX(0.9842);">1000</span>
<span class="t s" style="font-size:14.5px;color:#b7b7b7;left:1432.00px;top:207.73px;transform:scaleX(0.9588);">-1</span>
<div class="r" style="left:413px;top:228px;width:1076px;height:161px;background:#2b2b2b;border:1px solid #3d6594;"></div>
<div class="r" style="left:414px;top:228px;width:1074px;height:2px;background:#3d6594;"></div>
<div class="r" style="left:414px;top:230px;width:13.3px;height:158px;background:#3b3e40;"></div>
<div class="r" style="left:427.3px;top:230px;width:1060.7px;height:18.3px;background:#323232;"></div>
<span class="t m" style="font-size:14.5px;color:#a1a4a6;left:416.37px;top:230.91px;transform:scaleX(0.9286);">1</span>
<span class="t m" style="font-size:14.5px;color:#a9b7c6;letter-spacing:-0.701px;left:427.6px;top:230.71px;"><b style="color:#cc7832">SELECT</b> CONCAT_WS(<span style="color:#7a9a58">'-'</span>, <b style="color:#cc7832">NULL</b>, <span style="color:#7a9a58">'B'</span>, <b style="color:#cc7832">NULL</b>, <span style="color:#7a9a58">'D'</span>, <b style="color:#cc7832">NULL</b>, <b style="color:#cc7832">NULL</b>);</span>
<div class="r" style="left:1493px;top:229px;width:9px;height:9px;background:#f2f2f2;"></div>
<div class="r" style="left:1492.7px;top:228.7px;width:8.4px;height:8.5px;background:#00dd00;"></div>
<span class="t s" style="font-size:14.5px;color:#b7b7b7;left:416.34px;top:400.73px;transform:scaleX(0.9574);">1:57 </span>
<span class="t s" style="font-size:14.5px;color:#b7b7b7;left:447.57px;top:400.73px;transform:scaleX(1.0335);">[57]</span>
<span class="t s" style="font-size:14.5px;color:#b7b7b7;left:482.75px;top:400.73px;transform:scaleX(0.9511);">INS</span>
<span class="t s" style="font-size:14.5px;color:#b7b7b7;left:1108.43px;top:400.73px;transform:scaleX(0.9731);">UNIX/Linux/macOS</span>
<span class="t s" style="font-size:14.5px;color:#b7b7b7;left:1243.00px;top:400.73px;transform:scaleX(0.9978);">Auto </span>
<span class="t s" style="font-size:14.5px;color:#b7b7b7;left:1278.20px;top:400.73px;transform:scaleX(1.0181);">Commit: </span>
<span class="t s" style="font-size:14.5px;color:#b7b7b7;left:1336.80px;top:400.73px;transform:scaleX(0.9775);">ON</span>
<span class="t s" style="font-size:14.5px;color:#b7b7b7;left:1369.30px;top:400.73px;transform:scaleX(0.9561);">Cp1252</span>
<span class="t s" style="font-size:14.5px;color:#b7b7b7;left:1428.69px;top:400.73px;transform:scaleX(1.0099);">Untitled*</span>
<svg class="i" style="left:945.9px;top:422.1px" width="22.440000000000055" height="6.0" viewBox="0 0 22.440000000000055 6.0"><circle cx="3.0" cy="3.0" r="1.4" fill="#c8cacb"/><circle cx="8.48" cy="3.0" r="1.4" fill="#c8cacb"/><circle cx="13.96" cy="3.0" r="1.4" fill="#c8cacb"/><circle cx="19.44" cy="3.0" r="1.4" fill="#c8cacb"/></svg>
<div class="r" style="left:1504.7px;top:145.6px;width:28.2px;height:92.8px;background:#5b5f61;border-radius:5px;"></div>
<svg class="i" style="left:1510.5px;top:151px" width="11.5" height="12" viewBox="0 0 11.500 12"><path d="M0.600 0.600h7l3.300 3.300v7.500H0.600z" fill="none" stroke="#7d8183" stroke-width="1.1"/><path d="M2.500 1v10" fill="none" stroke="#7d8183" stroke-width="1"/><path d="M4.500 5h4M4.500 7h4.500M4.500 9h4.500M4.500 3h2" fill="none" stroke="#7d8183" stroke-width="0.9"/></svg>
<span class="t s" style="font-size:14.5px;color:#b7b7b7;left:1512.2px;top:168.50px;transform:rotate(90deg) scaleX(0.9467) translateY(-0.8465em);">SQL Editor</span>
<svg class="i" style="left:1508.4px;top:248.1px" width="15.345" height="12.375" viewBox="0 0 15.500 12.500"><rect x="9.7" y="0" width="5.7" height="5.2" fill="#4a88c7"/><rect x="0.55" y="4.2" width="4.9" height="4.4" fill="none" stroke="#808486" stroke-width="1.1" rx="0.5"/><rect x="10.2" y="8.4" width="4.7" height="3.5" fill="none" stroke="#808486" stroke-width="1.1" rx="0.8"/><path d="M5.500 6.400L9.700 3M5.500 6.400l4.700 3.700" fill="none" stroke="#808486" stroke-width="1.1"/></svg>
<span class="t s" style="font-size:14.5px;color:#b7b7b7;left:1512.2px;top:265.00px;transform:rotate(90deg) scaleX(0.9570) translateY(-0.8465em);">Query Builder</span>
<svg class="i" style="left:405.7px;top:438.5px" width="6.0" height="22.80000000000001" viewBox="0 0 6.0 22.80000000000001"><circle cx="3.0" cy="3.0" r="1.45" fill="#bdbfc0"/><circle cx="3.0" cy="8.5" r="1.45" fill="#bdbfc0"/><circle cx="3.0" cy="14.2" r="1.45" fill="#bdbfc0"/><circle cx="3.0" cy="19.8" r="1.45" fill="#bdbfc0"/></svg>
<svg class="i" style="left:427.1px;top:441.7px" width="13.5" height="11.8" viewBox="0 0 13.500 11.800"><rect x="3.8" y="1.6" width="7" height="6.8" fill="#2c333b"/><path d="M3.100 9V0.800h9.700v1.700h-1.700V9" fill="none" stroke="#efc971" stroke-width="1.5"/><rect x="0.3" y="8.6" width="11.2" height="2.8" fill="#efc971" rx="0.8"/><path d="M1.200 9.300h8.800" fill="none" stroke="#2c333b" stroke-width="0.6"/></svg>
<span class="t s" style="font-size:14.5px;color:#b7b7b7;left:445.49px;top:441.73px;transform:scaleX(1.0117);">Log</span>
<svg class="i" style="left:496.7px;top:441px" width="15.6" height="13" viewBox="0 0 15.600 13"><rect x="0.5" y="0.5" width="14.6" height="12" fill="none" stroke="#a0a3a5" stroke-width="1" rx="1"/><rect x="0.5" y="0.5" width="14.6" height="2.8" fill="#a0a3a5"/><path d="M0.500 6.300h14.600M0.500 9.300h14.600M3.500 3v9.500M6.400 3v9.500M9.300 3v9.500M12.200 3v9.500" fill="none" stroke="#a0a3a5" stroke-width="0.9"/></svg>
<span class="t s" style="font-size:14.5px;color:#d0d0d0;font-weight:700;left:517.70px;top:441.73px;transform:scaleX(0.8786);">1: </span>
<span class="t s" style="font-size:14.5px;color:#d0d0d0;font-weight:700;left:532.50px;top:441.73px;transform:scaleX(0.8249);">SELECT </span>
<span class="t s" style="font-size:14.5px;color:#d0d0d0;font-weight:700;left:585.40px;top:441.73px;transform:scaleX(0.9706);">CONCAT_WS('-', </span>
<span class="t s" style="font-size:14.5px;color:#d0d0d0;font-weight:700;left:700.60px;top:441.73px;transform:scaleX(0.9049);">NULL, </span>
<span class="t s" style="font-size:14.5px;color:#d0d0d0;font-weight:700;left:744.80px;top:441.73px;transform:scaleX(0.9470);">'B... </span>
<span class="t s" style="font-size:14.5px;color:#d0d0d0;font-weight:700;left:774.20px;top:441.73px;transform:scaleX(0.9613);">[1]</span>
<svg class="i" style="left:801px;top:442.5px" width="10" height="10" viewBox="0 0 10 10"><path d="M0.500 0.500l9 9M9.500 0.500l-9 9" fill="none" stroke="#909395" stroke-width="1.1"/></svg>
<div class="r" style="left:413px;top:466px;width:1089px;height:1.4px;background:#585b5d;"></div>
<div class="r" style="left:483.2px;top:462.3px;width:341.6px;height:5px;background:#4a88c7;"></div>
<svg class="i" style="left:1479.5px;top:444.3px" width="9.5" height="9.5" viewBox="0 0 9.500 9.500"><rect x="0.7" y="0.7" width="8" height="8" fill="none" stroke="#cfd1d2" stroke-width="1.4"/></svg>
<svg class="i" style="left:418.3px;top:478.3px" width="11.2" height="12.7" viewBox="0 0 11.500 12"><path d="M1 6.500V4.800a1.800 1.800 0 0 1 1.800-1.800H7.500M5.800 0.700L8.100 3 5.800 5.300" fill="none" stroke="#4a88c7" stroke-width="1.9"/><path d="M10.500 5.500v1.700a1.800 1.800 0 0 1-1.800 1.800H4M5.700 6.700L3.400 9l2.300 2.300" fill="none" stroke="#4a88c7" stroke-width="1.9"/><path d="M10.500 6V4.200a1.200 1.200 0 0 0-1.200-1.200M1 6v1.800a1.200 1.200 0 0 0 1.200 1.200" fill="none" stroke="#4a88c7" stroke-width="1.9"/></svg>
<svg class="i" style="left:438.6px;top:477.2px" width="14" height="14" viewBox="0 0 14 14"><circle cx="7" cy="7" r="6.3" fill="#474b4d" stroke="#63676a" stroke-width="1.2"/><circle cx="7" cy="7" r="4.6" fill="#747879"/></svg>
<div class="r" style="left:459px;top:472.5px;width:1px;height:23.5px;background:#515457;"></div>
<svg class="i" style="left:465.7px;top:476.8px" width="11.8" height="14.4" viewBox="0 0 11.800 14.400"><path d="M2.800 1.600H0.600v12.200h10.500V4L8.800 1.600" fill="none" stroke="#8d9193" stroke-width="1.1"/><path d="M5.850 8V3" fill="none" stroke="#4a88c7" stroke-width="2.2"/><path d="M2.700 4.300L5.850 0.300 9 4.300z" fill="#4a88c7"/></svg>
<svg class="i" style="left:488.4px;top:482.3px" width="7.5" height="5" viewBox="0 0 7.5 5"><path d="M0.500 0.500L3.75 4L7.0 0.500" fill="none" stroke="#9da0a2" stroke-width="1.3"/></svg>
<svg class="i" style="left:503px;top:477.6px" width="13" height="12.4" viewBox="0 0 13 12.400"><rect x="0.5" y="0.5" width="12" height="11.4" fill="none" stroke="#84888a" stroke-width="1"/><rect x="0.5" y="0.5" width="12" height="1.6" fill="#84888a"/><path d="M0.500 4.700h12M0.500 7.200h12M0.500 9.700h12M3.500 2v10M6.500 2v10M9.500 2v10" fill="none" stroke="#84888a" stroke-width="0.8"/></svg>
<svg class="i" style="left:527px;top:482.3px" width="7.5" height="5" viewBox="0 0 7.5 5"><path d="M0.500 0.500L3.75 4L7.0 0.500" fill="none" stroke="#9da0a2" stroke-width="1.3"/></svg>
<div class="r" style="left:540.2px;top:472.5px;width:1px;height:23.5px;background:#515457;"></div>
<svg class="i" style="left:550px;top:477.6px" width="9.2" height="13.4" viewBox="0 0 9.200 13.400"><rect x="0.5" y="0.5" width="8.2" height="12.4" fill="none" stroke="#606466" stroke-width="1"/><rect x="1.8" y="2" width="5.6" height="2.6" fill="#606466"/><path d="M1.800 6.300h5.600M1.800 8.500h5.600M1.800 10.700h5.600" fill="none" stroke="#606466" stroke-width="1.2" stroke-dasharray="1.400 0.700"/></svg>
<div class="r" style="left:1267.3px;top:471.7px;width:168px;height:25px;background:#46494b;border:1px solid #5a5d5f;"></div>
<svg class="i" style="left:1270.3px;top:478px" width="14" height="14" viewBox="0 0 14 14"><circle cx="5.2" cy="5.2" r="4.5" fill="none" stroke="#7b7f82" stroke-width="1.2"/><path d="M8.600 8.600l4.300 4.300" fill="none" stroke="#9a9da0" stroke-width="2.3"/></svg>
<div class="r" style="left:1435.5px;top:471.7px;width:21.8px;height:25px;background:#5c6063;border-radius:4px;"></div>
<svg class="i" style="left:1439.3px;top:478.7px" width="14.4" height="11.8" viewBox="0 0 14.400 11.800"><rect x="0.5" y="0.5" width="13.4" height="10.8" fill="none" stroke="#74787a" stroke-width="1"/><path d="M0.500 3.300h13.400M0.500 6h13.400M0.500 8.700h13.400M3.900 0.500v10.800M7.200 0.500v10.800M10.500 0.500v10.800" fill="none" stroke="#74787a" stroke-width="0.9"/></svg>
<svg class="i" style="left:1463.3px;top:478.5px" width="11.3" height="12.5" viewBox="0 0 11.300 12.500"><rect x="0.6" y="0.6" width="10.1" height="11.3" fill="none" stroke="#a3a6a8" stroke-width="1.1"/><path d="M2.500 3.500h6.300M2.500 6h6.300M2.500 9h2.500M6.300 9h2.500" fill="none" stroke="#a3a6a8" stroke-width="1.1"/></svg>
<svg class="i" style="left:1484.5px;top:478px" width="12" height="13" viewBox="0 0 12 13"><path d="M0.600 0.600h6.800l4 4v7.800H0.600z" fill="none" stroke="#a3a6a8" stroke-width="1.1"/><path d="M7.400 0.600v4h4" fill="none" stroke="#a3a6a8" stroke-width="0.9"/><rect x="2.2" y="5.8" width="8" height="5.6" fill="#4a88c7"/><path d="M3 10.500l2.500-2.500 1.500 1 2.500-2.500" fill="none" stroke="#3c3f41" stroke-width="0.9"/></svg>
<div class="r" style="left:413px;top:502px;width:1089px;height:267px;background:#46494b;border:1px solid #55585a;"></div>
<div class="r" style="left:414px;top:503px;width:31px;height:265px;background:#3c3f41;"></div>
<div class="r" style="left:445px;top:534.5px;width:1056px;height:1px;background:#585b5d;"></div>
<div class="r" style="left:520px;top:503px;width:1px;height:32px;background:#585b5d;"></div>
<span class="t s" style="font-size:14.5px;color:#b7b7b7;left:427.30px;top:513.73px;transform:scaleX(0.9167);">*</span>
<span class="t s" style="font-size:14.5px;color:#b7b7b7;left:446.03px;top:512.73px;transform:scaleX(0.7714);">1 </span>
<span class="t s" style="font-size:14.5px;color:#b7b7b7;left:456.72px;top:512.73px;transform:scaleX(1.0809);">N/A</span>
<span class="t s" style="font-size:14.5px;color:#b7b7b7;left:426.99px;top:540.73px;transform:scaleX(0.7143);">1</span>
<span class="t s" style="font-size:14.5px;color:#b7b7b7;left:445.80px;top:540.73px;transform:scaleX(1.0000);">B-D</span>
<span class="t s" style="font-size:14.5px;color:#b7b7b7;left:433.80px;top:777.73px;transform:scaleX(0.9964);">Format: </span>
<span class="t s" style="font-size:14.5px;color:#b7b7b7;left:488.60px;top:777.73px;transform:scaleX(0.9130);">&lt;Select </span>
<span class="t s" style="font-size:14.5px;color:#b7b7b7;left:537.55px;top:777.73px;transform:scaleX(0.7167);">a </span>
<span class="t s" style="font-size:14.5px;color:#b7b7b7;left:549.00px;top:777.73px;transform:scaleX(0.9157);">Cell&gt;</span>
<span class="t s" style="font-size:14.5px;color:#b7b7b7;left:1312.30px;top:777.73px;transform:scaleX(0.9852);">0.002/0.000 </span>
<span class="t s" style="font-size:14.5px;color:#b7b7b7;left:1392.40px;top:777.73px;transform:scaleX(0.9097);">sec</span>
<span class="t s" style="font-size:14.5px;color:#b7b7b7;left:1428.39px;top:777.73px;transform:scaleX(1.0056);">1/1</span>
<span class="t s" style="font-size:14.5px;color:#b7b7b7;left:1476.64px;top:777.73px;transform:scaleX(0.9551);">1-1</span>
<svg class="i" style="left:1305.4px;top:803.7px" width="13" height="12" viewBox="0 0 13 12"><rect x="0.6" y="0.6" width="11.8" height="10.8" fill="none" stroke="#585c5e" stroke-width="1.1"/><path d="M0.600 3h11.800M2.500 7h6.500M7.300 5l2 2-2 2" fill="none" stroke="#585c5e" stroke-width="1.1"/></svg>
<svg class="i" style="left:1332.2px;top:803.7px" width="10.2" height="12" viewBox="0 0 10.200 12"><rect x="0" y="0" width="10.2" height="12" fill="#9a9da0" rx="0.6"/><rect x="1.1" y="1.5" width="4.59" height="1.6333333333333333" fill="#3c3f41"/><rect x="1.1" y="5.033333333333333" width="4.59" height="1.6333333333333333" fill="#3c3f41"/><rect x="1.1" y="8.566666666666666" width="4.59" height="1.6333333333333333" fill="#3c3f41"/></svg>
<svg class="i" style="left:1358.2px;top:804px" width="9.7" height="11.5" viewBox="0 0 11.500 12"><path d="M1 6.500V4.800a1.800 1.800 0 0 1 1.800-1.800H7.500M5.800 0.700L8.100 3 5.800 5.300" fill="none" stroke="#585c5e" stroke-width="1.4"/><path d="M10.500 5.500v1.700a1.800 1.800 0 0 1-1.800 1.800H4M5.700 6.700L3.400 9l2.300 2.300" fill="none" stroke="#585c5e" stroke-width="1.4"/><path d="M10.500 6V4.200a1.200 1.200 0 0 0-1.200-1.200M1 6v1.800a1.200 1.200 0 0 0 1.200 1.200" fill="none" stroke="#585c5e" stroke-width="1.4"/></svg>
<svg class="i" style="left:1381.2px;top:803.7px" width="14.2" height="12" viewBox="0 0 14.200 12"><path d="M7.100 1L13.500 11.300H0.700z" fill="none" stroke="#8a8e90" stroke-width="1.2" stroke-linejoin="round"/><path d="M7.100 4.800v3.500M7.100 9.200v1.200" fill="none" stroke="#8a8e90" stroke-width="1.2"/></svg>
<div class="r" style="left:1406.2px;top:797.8px;width:5.4px;height:22px;background:#000000;"></div>
<span class="t s" style="font-size:14.5px;color:#b7b7b7;left:1411.32px;top:803.73px;transform:scaleX(0.9784);">117M </span>
<span class="t s" style="font-size:14.5px;color:#b7b7b7;left:1450.20px;top:803.73px;transform:scaleX(1.0180);">of </span>
<span class="t s" style="font-size:14.5px;color:#b7b7b7;left:1468.20px;top:803.73px;transform:scaleX(1.0102);">2048M</span>
<svg class="i" style="left:1524.4px;top:803px" width="12" height="13" viewBox="0 0 12 13"><path d="M0.500 2.800h11.500" fill="none" stroke="#7d8183" stroke-width="1.2"/><path d="M3.500 2.800V0.800h5v2" fill="none" stroke="#7d8183" stroke-width="1.1"/><path d="M1.500 3.500h9v9.500h-9z" fill="#54585a" stroke="#7d8183" stroke-width="1.1"/><path d="M4 5.500v5.500M6 5.500v5.500M8 5.500v5.500" fill="none" stroke="#7d8183" stroke-width="0.9"/></svg>
<div class="r" style="left:1306px;top:820.6px;width:3px;height:1.4px;background:#54585a;"></div>
<div class="r" style="left:1311px;top:820.6px;width:3px;height:1.4px;background:#54585a;"></div>
<div class="r" style="left:1316px;top:820.6px;width:2px;height:1.4px;background:#54585a;"></div>
<div class="r" style="left:1333px;top:820.6px;width:3px;height:1.4px;background:#54585a;"></div>
<div class="r" style="left:1338px;top:820.6px;width:4px;height:1.4px;background:#54585a;"></div>
<div class="r" style="left:1361px;top:820.6px;width:4px;height:1.4px;background:#54585a;"></div>
<div class="r" style="left:1387px;top:820.6px;width:2px;height:1.4px;background:#54585a;"></div>
<div class="r" style="left:1412px;top:820.6px;width:3px;height:1.4px;background:#54585a;"></div>
<div class="r" style="left:1417px;top:820.6px;width:3px;height:1.4px;background:#54585a;"></div>
<div class="r" style="left:1423px;top:820.6px;width:4px;height:1.4px;background:#54585a;"></div>
<div class="r" style="left:1431px;top:820.6px;width:5px;height:1.4px;background:#54585a;"></div>
<div class="r" style="left:1440px;top:820.6px;width:4px;height:1.4px;background:#54585a;"></div>
<div class="r" style="left:1447px;top:820.6px;width:3px;height:1.4px;background:#54585a;"></div>
<div class="r" style="left:1455px;top:820.6px;width:4px;height:1.4px;background:#54585a;"></div>
<div class="r" style="left:1462px;top:820.6px;width:5px;height:1.4px;background:#54585a;"></div>
<div class="r" style="left:1471px;top:820.6px;width:5px;height:1.4px;background:#54585a;"></div>
<div class="r" style="left:1479px;top:820.6px;width:5px;height:1.4px;background:#54585a;"></div>
<div class="r" style="left:1488px;top:820.6px;width:5px;height:1.4px;background:#54585a;"></div>
<div class="r" style="left:1497px;top:820.6px;width:5px;height:1.4px;background:#54585a;"></div>
<div class="r" style="left:1505px;top:820.6px;width:5px;height:1.4px;background:#54585a;"></div>
<div class="r" style="left:1526px;top:820.6px;width:4px;height:1.4px;background:#54585a;"></div>
<div class="r" style="left:1532px;top:820.6px;width:3px;height:1.4px;background:#54585a;"></div>
</body></html>
